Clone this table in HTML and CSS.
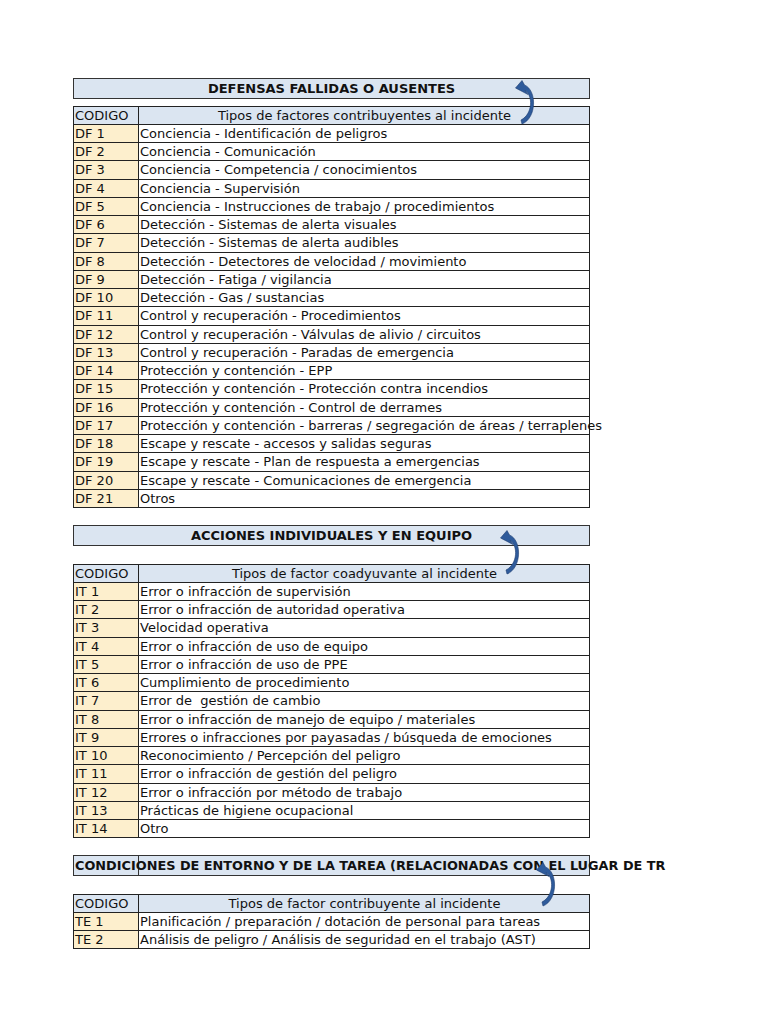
FILE: index.html
```html
<!DOCTYPE html>
<html lang="es">
<head>
<meta charset="utf-8">
<title>Factores contribuyentes</title>
<link rel="stylesheet" href="styles.css">
</head>
<body>
<div class="page">

  <section class="section s1">
    <div class="title">DEFENSAS FALLIDAS O AUSENTES</div>
    <svg class="arrow a1" width="26" height="46" viewBox="0 0 26 46"><path d="M14.5 5 C27 10 27 38 12 44 L11 40 C23 34 23 15 15 10.5 L18 14.5 L5.5 8 L12 0.5 Z"/></svg>
    <div class="table">
      <div class="row head"><div class="code">CODIGO</div><div class="desc">Tipos de factores contribuyentes al incidente</div></div>
      <div class="row"><div class="code">DF 1</div><div class="desc">Conciencia - Identificación de peligros</div></div>
      <div class="row"><div class="code">DF 2</div><div class="desc">Conciencia - Comunicación</div></div>
      <div class="row"><div class="code">DF 3</div><div class="desc">Conciencia - Competencia / conocimientos</div></div>
      <div class="row"><div class="code">DF 4</div><div class="desc">Conciencia - Supervisión</div></div>
      <div class="row"><div class="code">DF 5</div><div class="desc">Conciencia - Instrucciones de trabajo / procedimientos</div></div>
      <div class="row"><div class="code">DF 6</div><div class="desc">Detección - Sistemas de alerta visuales</div></div>
      <div class="row"><div class="code">DF 7</div><div class="desc">Detección - Sistemas de alerta audibles</div></div>
      <div class="row"><div class="code">DF 8</div><div class="desc">Detección - Detectores de velocidad / movimiento</div></div>
      <div class="row"><div class="code">DF 9</div><div class="desc">Detección - Fatiga / vigilancia</div></div>
      <div class="row"><div class="code">DF 10</div><div class="desc">Detección - Gas / sustancias</div></div>
      <div class="row"><div class="code">DF 11</div><div class="desc">Control y recuperación - Procedimientos</div></div>
      <div class="row"><div class="code">DF 12</div><div class="desc">Control y recuperación - Válvulas de alivio / circuitos</div></div>
      <div class="row"><div class="code">DF 13</div><div class="desc">Control y recuperación - Paradas de emergencia</div></div>
      <div class="row"><div class="code">DF 14</div><div class="desc">Protección y contención - EPP</div></div>
      <div class="row"><div class="code">DF 15</div><div class="desc">Protección y contención - Protección contra incendios</div></div>
      <div class="row"><div class="code">DF 16</div><div class="desc">Protección y contención - Control de derrames</div></div>
      <div class="row"><div class="code">DF 17</div><div class="desc">Protección y contención - barreras / segregación de áreas / terraplenes</div></div>
      <div class="row"><div class="code">DF 18</div><div class="desc">Escape y rescate - accesos y salidas seguras</div></div>
      <div class="row"><div class="code">DF 19</div><div class="desc">Escape y rescate - Plan de respuesta a emergencias</div></div>
      <div class="row"><div class="code">DF 20</div><div class="desc">Escape y rescate - Comunicaciones de emergencia</div></div>
      <div class="row"><div class="code">DF 21</div><div class="desc">Otros</div></div>
    </div>
  </section>

  <section class="section s2">
    <div class="title">ACCIONES INDIVIDUALES Y EN EQUIPO</div>
    <svg class="arrow a2" width="26" height="46" viewBox="0 0 26 46"><path d="M14.5 5 C27 10 27 38 12 44 L11 40 C23 34 23 15 15 10.5 L18 14.5 L5.5 8 L12 0.5 Z"/></svg>
    <div class="table">
      <div class="row head"><div class="code">CODIGO</div><div class="desc">Tipos de factor coadyuvante al incidente</div></div>
      <div class="row"><div class="code">IT 1</div><div class="desc">Error o infracción de supervisión</div></div>
      <div class="row"><div class="code">IT 2</div><div class="desc">Error o infracción de autoridad operativa</div></div>
      <div class="row"><div class="code">IT 3</div><div class="desc">Velocidad operativa</div></div>
      <div class="row"><div class="code">IT 4</div><div class="desc">Error o infracción de uso de equipo</div></div>
      <div class="row"><div class="code">IT 5</div><div class="desc">Error o infracción de uso de PPE</div></div>
      <div class="row"><div class="code">IT 6</div><div class="desc">Cumplimiento de procedimiento</div></div>
      <div class="row"><div class="code">IT 7</div><div class="desc">Error de&nbsp; gestión de cambio</div></div>
      <div class="row"><div class="code">IT 8</div><div class="desc">Error o infracción de manejo de equipo / materiales</div></div>
      <div class="row"><div class="code">IT 9</div><div class="desc">Errores o infracciones por payasadas / búsqueda de emociones</div></div>
      <div class="row"><div class="code">IT 10</div><div class="desc">Reconocimiento / Percepción del peligro</div></div>
      <div class="row"><div class="code">IT 11</div><div class="desc">Error o infracción de gestión del peligro</div></div>
      <div class="row"><div class="code">IT 12</div><div class="desc">Error o infracción por método de trabajo</div></div>
      <div class="row"><div class="code">IT 13</div><div class="desc">Prácticas de higiene ocupacional</div></div>
      <div class="row"><div class="code">IT 14</div><div class="desc">Otro</div></div>
    </div>
  </section>

  <section class="section s3">
    <div class="title split"><div class="tcode">CONDICIONES DE ENTORNO Y DE LA TAREA (RELACIONADAS CON EL LUGAR DE TR</div><div class="tdesc"></div></div>
    <svg class="arrow a3" width="26" height="46" viewBox="0 0 26 46"><path d="M14.5 5 C27 10 27 38 12 44 L11 40 C23 34 23 15 15 10.5 L18 14.5 L5.5 8 L12 0.5 Z"/></svg>
    <div class="table">
      <div class="row head"><div class="code">CODIGO</div><div class="desc">Tipos de factor contribuyente al incidente</div></div>
      <div class="row"><div class="code">TE 1</div><div class="desc">Planificación / preparación / dotación de personal para tareas</div></div>
      <div class="row"><div class="code">TE 2</div><div class="desc">Análisis de peligro / Análisis de seguridad en el trabajo (AST)</div></div>
    </div>
  </section>

</div>
</body>
</html>
```

FILE: styles.css
```css
html, body {
  margin: 0;
  padding: 0;
  background: #ffffff;
}

body {
  font-family: "DejaVu Sans", "Noto Sans", sans-serif;
  color: #111111;
  font-size: 13px;
}

.page {
  padding: 78px 0 0 73px;
}

.section {
  position: relative;
  width: 517px;
}

.section + .section {
  margin-top: 17px;
}

.title {
  box-sizing: border-box;
  height: 21px;
  border: 1px solid #333333;
  background: #dbe5f1;
  font-weight: bold;
  font-size: 13px;
  line-height: 20px;
  text-align: center;
  white-space: nowrap;
}

.title.split {
  display: grid;
  grid-template-columns: 65px 1fr;
  text-align: left;
  font-size: 12.85px;
}

.title.split .tcode {
  border-right: 1px solid #333333;
  padding-left: 1px;
  overflow: visible;
}

.table {
  margin-top: 18px;
  border: 1px solid #222222;
  border-bottom: none;
}

.s1 .table {
  margin-top: 7px;
}

.row {
  box-sizing: border-box;
  display: grid;
  grid-template-columns: 65px 1fr;
  height: 18px;
  border-bottom: 1px solid #222222;
  line-height: 17px;
}

.row:nth-child(4n) {
  height: 19px;
  line-height: 18px;
}

.code {
  border-right: 1px solid #222222;
  background: #fdefcd;
  padding-left: 1px;
  white-space: nowrap;
}

.desc {
  padding-left: 1px;
  white-space: nowrap;
}

.head .code,
.head .desc {
  background: #dbe5f1;
}

.head .desc {
  text-align: center;
}

.arrow {
  position: absolute;
  z-index: 2;
}

.arrow path {
  fill: #2f5b9b;
  stroke: #1d3d70;
  stroke-width: 0.6;
  stroke-linejoin: round;
}

.a1 { left: 437px; top: 2px; }
.a2 { left: 422px; top: 5px; }
.a3 { left: 458px; top: 7px; }
```
